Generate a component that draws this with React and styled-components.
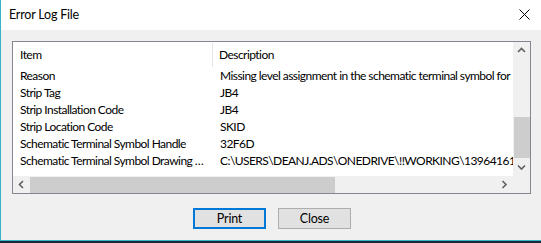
import styled, { createGlobalStyle } from 'styled-components';

const rows = [
  ['Reason', 'Missing level assignment in the schematic terminal symbol for'],
  ['Strip Tag', 'JB4'],
  ['Strip Installation Code', 'JB4'],
  ['Strip Location Code', 'SKID'],
  ['Schematic Terminal Symbol Handle', '32F6D'],
  ['Schematic Terminal Symbol Drawing Name', 'C:\\USERS\\DEANJ.ADS\\ONEDRIVE\\!!WORKING\\13964161\\PDF'],
];

const Chevron = ({ dir }) => {
  const pts = {
    up: '1,5 4.5,1.5 8,5',
    down: '1,1.5 4.5,5 8,1.5',
    left: '5,1 1.5,4.5 5,8',
    right: '1.5,1 5,4.5 1.5,8',
  }[dir];
  const horiz = dir === 'left' || dir === 'right';
  return (
    <svg width={horiz ? 7 : 9} height={horiz ? 9 : 7} viewBox={horiz ? '0 0 7 9' : '0 0 9 7'}>
      <polyline points={pts} fill="none" stroke="#606060" strokeWidth="1.6" />
    </svg>
  );
};

const App = () => {
  return (
    <>
      <GlobalStyle />
      <Window>
        <TitleBar>
          <Title>Error Log File</Title>
          <CloseX>
            <svg width="11" height="11" viewBox="0 0 11 11">
              <path d="M0.5 0.5 L10.5 10.5 M10.5 0.5 L0.5 10.5" stroke="#000" strokeWidth="1" />
            </svg>
          </CloseX>
        </TitleBar>
        <Body>
          <ListBox>
            <ListContent>
              <HeaderRow>
                <HeadCell $first>Item</HeadCell>
                <HeadCell>Description</HeadCell>
              </HeaderRow>
              {rows.map(([item, desc]) => (
                <Row key={item}>
                  <Cell $first>{item}</Cell>
                  <Cell>{desc}</Cell>
                </Row>
              ))}
            </ListContent>
            <VScroll>
              <ArrowBox><Chevron dir="up" /></ArrowBox>
              <VTrack>
                <VThumb />
              </VTrack>
              <ArrowBox><Chevron dir="down" /></ArrowBox>
            </VScroll>
            <HScroll>
              <ArrowBox><Chevron dir="left" /></ArrowBox>
              <HTrack>
                <HThumb />
              </HTrack>
              <ArrowBox><Chevron dir="right" /></ArrowBox>
            </HScroll>
            <Corner />
          </ListBox>
          <ButtonRow>
            <Button $default>Print</Button>
            <Button>Close</Button>
          </ButtonRow>
        </Body>
        <BottomEdge />
      </Window>
    </>
  );
};

export default App;

const GlobalStyle = createGlobalStyle`
  html, body {
    margin: 0;
    padding: 0;
    background: #f0f0f0;
    overflow: hidden;
  }
`;

const Window = styled.div`
  width: 541px;
  height: 243px;
  box-sizing: border-box;
  border-left: 1px solid #33b5c7;
  display: flex;
  flex-direction: column;
  font-family: Lato, "Noto Sans", sans-serif;
  font-size: 12px;
  letter-spacing: -0.55px;
  color: #000;
`;

const TitleBar = styled.div`
  height: 30px;
  flex-shrink: 0;
  background: #fff;
  display: flex;
  align-items: center;
  justify-content: space-between;
  padding-left: 8px;
`;

const Title = styled.span`
  font-size: 12.5px;
  letter-spacing: -0.2px;
  margin-top: -2px;
`;

const CloseX = styled.div`
  width: 46px;
  height: 30px;
  display: flex;
  align-items: center;
  justify-content: center;
  margin-right: -6px;
  margin-top: -2px;
`;

const Body = styled.div`
  flex: 1;
  background: #f0f0f0;
  padding: 11px 0 0 11px;
  display: flex;
  flex-direction: column;
`;

const ListBox = styled.div`
  width: 519px;
  height: 153px;
  box-sizing: border-box;
  border: 1px solid #828790;
  background: #fff;
  display: grid;
  grid-template-columns: 500px 17px;
  grid-template-rows: 134px 17px;
`;

const ListContent = styled.div`
  overflow: hidden;
  display: flex;
  flex-direction: column;
`;

const HeaderRow = styled.div`
  height: 25px;
  display: grid;
  grid-template-columns: 200px 1fr;
  align-items: center;
`;

const HeadCell = styled.div`
  height: 24px;
  line-height: 24px;
  padding-left: ${p => (p.$first ? '7px' : '6px')};
  border-right: ${p => (p.$first ? '1px solid #e5e5e5' : 'none')};
  white-space: nowrap;
  overflow: hidden;
`;

const Row = styled.div`
  height: 17px;
  display: grid;
  grid-template-columns: 200px 1fr;
  align-items: center;
`;

const Cell = styled.div`
  line-height: 17px;
  padding-left: 7px;
  padding-right: ${p => (p.$first ? '4px' : '0')};
  white-space: nowrap;
  overflow: hidden;
  text-overflow: ${p => (p.$first ? 'ellipsis' : 'clip')};
`;

const VScroll = styled.div`
  background: #f0f0f0;
  display: flex;
  flex-direction: column;
`;

const HScroll = styled.div`
  background: #f0f0f0;
  display: flex;
`;

const ArrowBox = styled.div`
  width: 17px;
  height: 17px;
  flex-shrink: 0;
  display: flex;
  align-items: center;
  justify-content: center;
`;

const VTrack = styled.div`
  flex: 1;
  position: relative;
`;

const VThumb = styled.div`
  position: absolute;
  left: 1px;
  right: 0;
  top: 58px;
  height: 41px;
  background: #cdcdcd;
`;

const HTrack = styled.div`
  flex: 1;
  position: relative;
`;

const HThumb = styled.div`
  position: absolute;
  top: 1px;
  bottom: 0;
  left: 0;
  width: 305px;
  background: #cdcdcd;
`;

const Corner = styled.div`
  background: #f0f0f0;
`;

const ButtonRow = styled.div`
  display: flex;
  gap: 12px;
  margin-top: 14px;
  padding-left: 181px;
`;

const Button = styled.button`
  width: 73px;
  height: 21px;
  box-sizing: border-box;
  padding: 0;
  font-family: inherit;
  font-size: 12.5px;
  letter-spacing: -0.2px;
  color: #000;
  background: #e1e1e1;
  border: ${p => (p.$default ? '2px solid #0078d7' : '1px solid #adadad')};
  border-radius: 0;
`;

const BottomEdge = styled.div`
  height: 3px;
  flex-shrink: 0;
  border-top: 1px solid #33b5c7;
  background: #1d2a33;
  box-sizing: border-box;
  margin-left: -1px;
`;
